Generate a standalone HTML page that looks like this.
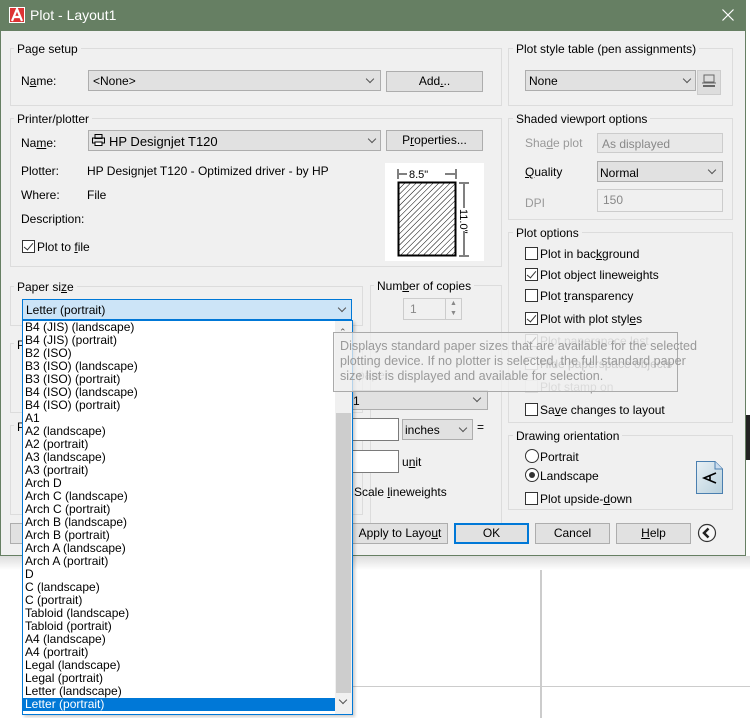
<!DOCTYPE html>
<html><head><meta charset="utf-8"><style>
*{box-sizing:border-box;margin:0;padding:0}
body{width:750px;height:718px;position:relative;overflow:hidden;background:#fff;font-family:"Liberation Sans",sans-serif;font-size:12px;color:#000}
.a{position:absolute;white-space:nowrap}
.grp{position:absolute;border:1px solid #dcdcdc}
.gl{position:absolute;background:#f0f0f0;padding:0 3px;font-size:12px;line-height:14px}
.cb{position:absolute;border:1px solid #adadad;background:#e1e1e1}
.btn{position:absolute;border:1px solid #adadad;background:#e1e1e1;text-align:center;line-height:18px}
.chk{position:absolute;width:13px;height:13px;border:1px solid #333;background:#fff}
.chk.on::after{content:"";position:absolute;left:3px;top:0px;width:4px;height:8px;border:solid #333;border-width:0 1.5px 1.5px 0;transform:rotate(40deg)}
.arr{position:absolute;width:6px;height:6px;border:solid #555;border-width:0 1px 1px 0;transform:rotate(45deg)}
.txt{position:absolute;border:1px solid #7a7a7a;background:#fff}
.list div{height:13px;line-height:13px;padding-left:2px;font-size:12px}
</style></head><body>
<div class="a" style="left:540px;top:555px;width:2px;height:163px;background:#ccc"></div>
<div class="a" style="left:350px;top:686px;width:400px;height:1px;background:#ccc"></div>
<div class="a" style="left:745px;top:415px;width:5px;height:45px;background:#222"></div>
<div class="a" style="left:0;top:556px;width:750px;height:14px;background:linear-gradient(#ddd,#fff)"></div>
<div class="a" style="left:0;top:0;width:746px;height:556px;background:#f0f0f0;border:1px solid #667f63;border-top:none"></div>
<div class="a" style="left:0;top:0;width:746px;height:31px;background:#667f63"></div>
<svg class="a" style="left:9px;top:7px" width="16" height="16"><rect width="16" height="16" fill="#fff"/><rect x="1" y="1" width="14" height="14" fill="#d33"/><path d="M3 14 L8 2 L13 14 M5 10 H11" stroke="#fff" stroke-width="2.2" fill="none"/></svg>
<div class="a" style="left:30px;top:7px;color:#fff;font-size:14px">Plot - Layout1</div>
<svg class="a" style="left:722px;top:9px" width="12" height="12"><path d="M0.5 0.5 L11.5 11.5 M11.5 0.5 L0.5 11.5" stroke="#fff" stroke-width="1.2"/></svg>

<div class="grp" style="left:10px;top:48px;width:492px;height:58px"></div>
<div class="gl" style="left:14px;top:42px">Page setup</div>
<div class="a" style="left:21px;top:74px">N<u>a</u>me:</div>
<div class="cb" style="left:88px;top:70px;width:293px;height:21px"></div>
<div class="a" style="left:93px;top:74px">&lt;None&gt;</div>
<div class="arr" style="left:367px;top:76px"></div>
<div class="btn" style="left:386px;top:71px;width:97px;height:21px">Add<u>.</u>..</div>

<div class="grp" style="left:10px;top:118px;width:492px;height:149px"></div>
<div class="gl" style="left:14px;top:112px">Printer/plotter</div>
<div class="a" style="left:21px;top:136px">Na<u>m</u>e:</div>
<div class="cb" style="left:88px;top:130px;width:293px;height:21px"></div>
<svg class="a" style="left:92px;top:134px" width="13" height="12"><rect x="3" y="0.5" width="7" height="4" fill="none" stroke="#000"/><rect x="0.5" y="4" width="12" height="5" fill="none" stroke="#000"/><rect x="3" y="8" width="7" height="3.5" fill="#fff" stroke="#000"/></svg>
<div class="a" style="left:109px;top:134px;font-size:13px">HP Designjet T120</div>
<div class="arr" style="left:369px;top:136px"></div>
<div class="btn" style="left:386px;top:130px;width:97px;height:21px">P<u>r</u>operties...</div>
<div class="a" style="left:21px;top:164px">Plotter:</div>
<div class="a" style="left:87px;top:164px">HP Designjet T120 - Optimized driver - by HP</div>
<div class="a" style="left:21px;top:188px">Where:</div>
<div class="a" style="left:87px;top:188px">File</div>
<div class="a" style="left:21px;top:212px">Description:</div>
<div class="chk on" style="left:22px;top:240px"></div>
<div class="a" style="left:37px;top:240px">Plot to <u>f</u>ile</div>
<div class="a" style="left:385px;top:163px;width:99px;height:98px;background:#fff"></div>
<svg class="a" style="left:385px;top:163px" width="99" height="98">
<defs><pattern id="h" width="4" height="4" patternUnits="userSpaceOnUse" patternTransform="rotate(45)"><line x1="0" y1="0" x2="0" y2="4" stroke="#000" stroke-width="1"/></pattern></defs>
<rect x="13.5" y="19.5" width="57" height="73" fill="url(#h)" stroke="#000" stroke-width="2"/>
<line x1="13" y1="6" x2="13" y2="16" stroke="#000"/><line x1="71" y1="6" x2="71" y2="16" stroke="#000"/>
<line x1="14" y1="11" x2="22" y2="11" stroke="#000"/><line x1="60" y1="11" x2="70" y2="11" stroke="#000"/>
<text x="24" y="15" font-size="11" font-family="Liberation Sans">8.5"</text>
<line x1="74" y1="20" x2="84" y2="20" stroke="#000"/><line x1="74" y1="93" x2="84" y2="93" stroke="#000"/>
<line x1="79" y1="21" x2="79" y2="45" stroke="#000"/><line x1="79" y1="68" x2="79" y2="92" stroke="#000"/>
<text x="0" y="0" font-size="11" font-family="Liberation Sans" transform="translate(75,46) rotate(90)">11.0"</text>
</svg>

<div class="grp" style="left:10px;top:286px;width:353px;height:40px"></div>
<div class="gl" style="left:14px;top:280px">Paper si<u>z</u>e</div>
<div class="a" style="left:22px;top:299px;width:330px;height:21px;background:#cce4f7;border:1px solid #0078d7"></div>
<div class="a" style="left:26px;top:303px">Letter (portrait)</div>
<div class="arr" style="left:339px;top:305px"></div>
<div class="grp" style="left:370px;top:285px;width:132px;height:250px;border-bottom:none"></div>
<div class="gl" style="left:374px;top:279px">Num<u>b</u>er of copies</div>
<div class="a" style="left:403px;top:298px;width:59px;height:22px;border:1px solid #ccc;background:#f0f0f0"></div>
<div class="a" style="left:410px;top:302px;color:#888">1</div>
<div class="a" style="left:445px;top:299px;width:16px;height:20px;border-left:1px solid #ccc;font-size:7px;color:#888;text-align:center;line-height:10px">▲<br>▼</div>

<div class="grp" style="left:10px;top:343px;width:353px;height:70px"></div>
<div class="gl" style="left:14px;top:338px">P</div>
<div class="grp" style="left:10px;top:425px;width:353px;height:90px"></div>
<div class="gl" style="left:14px;top:420px">P</div>
<div class="a" style="left:358px;top:368px;color:#999">paper</div>
<div class="cb" style="left:352px;top:390px;width:136px;height:20px"></div>
<div class="a" style="left:353px;top:394px">1</div>
<div class="arr" style="left:474px;top:395px"></div>
<div class="txt" style="left:352px;top:418px;width:47px;height:23px"></div>
<div class="cb" style="left:402px;top:419px;width:71px;height:21px"></div>
<div class="a" style="left:405px;top:423px">inches</div>
<div class="arr" style="left:460px;top:425px"></div>
<div class="a" style="left:477px;top:420px">=</div>
<div class="txt" style="left:352px;top:450px;width:47px;height:23px"></div>
<div class="a" style="left:402px;top:455px">u<u>n</u>it</div>
<div class="a" style="left:354px;top:485px">Scale <u>l</u>ineweights</div>

<div class="grp" style="left:508px;top:48px;width:225px;height:58px"></div>
<div class="gl" style="left:513px;top:42px">Plot style table (pen assi<u>g</u>nments)</div>
<div class="cb" style="left:525px;top:70px;width:171px;height:21px"></div>
<div class="a" style="left:529px;top:74px">None</div>
<div class="arr" style="left:684px;top:76px"></div>
<div class="a" style="left:697px;top:70px;width:24px;height:25px;background:#ddd;border:1px solid #ccc"></div>
<svg class="a" style="left:701px;top:74px" width="16" height="16"><rect x="3" y="1" width="10" height="7" fill="none" stroke="#666"/><line x1="1" y1="9" x2="15" y2="9" stroke="#666"/><line x1="2" y1="12" x2="14" y2="12" stroke="#666" stroke-width="2"/></svg>

<div class="grp" style="left:508px;top:118px;width:225px;height:102px"></div>
<div class="gl" style="left:513px;top:112px">Shaded viewport options</div>
<div class="a" style="left:525px;top:136px;color:#999">Sha<u>d</u>e plot</div>
<div class="a" style="left:597px;top:133px;width:126px;height:20px;background:#e8e8e8;border:1px solid #ccc"></div>
<div class="a" style="left:602px;top:137px;color:#888">As displayed</div>
<div class="a" style="left:525px;top:165px"><u>Q</u>uality</div>
<div class="cb" style="left:597px;top:161px;width:126px;height:21px"></div>
<div class="a" style="left:600px;top:166px">Normal</div>
<div class="arr" style="left:709px;top:167px"></div>
<div class="a" style="left:525px;top:196px;color:#999">DPI</div>
<div class="a" style="left:597px;top:189px;width:126px;height:23px;background:#f0f0f0;border:1px solid #ccc"></div>
<div class="a" style="left:603px;top:193px;color:#888">150</div>

<div class="grp" style="left:508px;top:232px;width:225px;height:191px"></div>
<div class="gl" style="left:513px;top:226px">Plot options</div>
<div class="chk" style="left:525px;top:247px"></div><div class="a" style="left:540px;top:247px">Plot in bac<u>k</u>ground</div>
<div class="chk on" style="left:525px;top:268px"></div><div class="a" style="left:540px;top:268px">Plot object lineweights</div>
<div class="chk" style="left:525px;top:289px"></div><div class="a" style="left:540px;top:289px">Plot <u>t</u>ransparency</div>
<div class="chk on" style="left:525px;top:312px"></div><div class="a" style="left:540px;top:312px">Plot with plot styl<u>e</u>s</div>
<div class="chk on" style="left:525px;top:334px;border-color:#999"></div><div class="a" style="left:540px;top:334px;color:#888">Plot paperspace last</div>
<div class="chk" style="left:525px;top:357px;border-color:#aaa"></div><div class="a" style="left:540px;top:357px;color:#555">Hide paperspace objects</div>
<div class="chk" style="left:525px;top:380px;border-color:#ddd;background:#f4f4f4"></div><div class="a" style="left:540px;top:380px;color:#999">Plot stamp on</div>
<div class="chk" style="left:525px;top:403px"></div><div class="a" style="left:540px;top:403px">Sa<u>v</u>e changes to layout</div>

<div class="grp" style="left:508px;top:435px;width:225px;height:75px"></div>
<div class="gl" style="left:513px;top:429px">Drawing orientation</div>
<div class="a" style="left:525px;top:449px;width:14px;height:14px;border:1px solid #333;border-radius:50%;background:#fff"></div>
<div class="a" style="left:540px;top:450px">Portrait</div>
<div class="a" style="left:525px;top:468px;width:14px;height:14px;border:1px solid #333;border-radius:50%;background:#fff"></div>
<div class="a" style="left:529px;top:472px;width:6px;height:6px;border-radius:50%;background:#333"></div>
<div class="a" style="left:540px;top:469px">Landscape</div>
<div class="chk" style="left:525px;top:492px"></div><div class="a" style="left:540px;top:492px">Plot upside-<u>d</u>own</div>
<svg class="a" style="left:696px;top:461px" width="27" height="33"><defs><linearGradient id="g" x1="0" y1="0" x2="1" y2="1"><stop offset="0" stop-color="#e8f0f5"/><stop offset="1" stop-color="#b8d0dc"/></linearGradient></defs><path d="M0.5 0.5 H19 L26.5 8 V32.5 H0.5 Z" fill="url(#g)" stroke="#4a7fb0"/><path d="M19 0.5 V8 H26.5" fill="#cde" stroke="#4a7fb0"/><path d="M20 12 L8 17 L20 22 M14 14.5 V19.5" stroke="#000" stroke-width="1.6" fill="none"/></svg>

<div class="btn" style="left:10px;top:523px;width:14px;height:21px"></div>
<div class="btn" style="left:352px;top:523px;width:96px;height:21px">Apply to Layo<u>u</u>t</div>
<div class="btn" style="left:454px;top:523px;width:75px;height:21px;border:2px solid #0078d7;line-height:17px">OK</div>
<div class="btn" style="left:535px;top:523px;width:75px;height:21px">Cancel</div>
<div class="btn" style="left:616px;top:523px;width:75px;height:21px"><u>H</u>elp</div>
<svg class="a" style="left:697px;top:523px" width="20" height="20"><circle cx="10" cy="10" r="8.5" fill="#f8f8f8" stroke="#333" stroke-width="1.2"/><path d="M11.5 5.5 L7 10 L11.5 14.5" stroke="#222" stroke-width="2.5" fill="none"/></svg>

<div class="a" style="left:22px;top:320px;width:331px;height:395px;background:#fff;border:1px solid #0078d7;box-shadow:2px 2px 3px rgba(0,0,0,.2)"></div>
<div class="a list" style="left:23px;top:321px;width:312px">
<div>B4 (JIS) (landscape)</div><div>B4 (JIS) (portrait)</div><div>B2 (ISO)</div><div>B3 (ISO) (landscape)</div><div>B3 (ISO) (portrait)</div><div>B4 (ISO) (landscape)</div><div>B4 (ISO) (portrait)</div><div>A1</div><div>A2 (landscape)</div><div>A2 (portrait)</div><div>A3 (landscape)</div><div>A3 (portrait)</div><div>Arch D</div><div>Arch C (landscape)</div><div>Arch C (portrait)</div><div>Arch B (landscape)</div><div>Arch B (portrait)</div><div>Arch A (landscape)</div><div>Arch A (portrait)</div><div>D</div><div>C (landscape)</div><div>C (portrait)</div><div>Tabloid (landscape)</div><div>Tabloid (portrait)</div><div>A4 (landscape)</div><div>A4 (portrait)</div><div>Legal (landscape)</div><div>Legal (portrait)</div><div>Letter (landscape)</div><div style="background:#0078d7;color:#fff">Letter (portrait)</div>
</div>
<div class="a" style="left:335px;top:321px;width:17px;height:393px;background:#f0f0f0"></div>
<div class="a" style="left:336px;top:413px;width:15px;height:280px;background:#cdcdcd"></div>
<div class="a" style="left:339px;top:327px;font-size:9px;color:#555">⌃</div>
<div class="arr" style="left:340px;top:697px;border-color:#555"></div>

<div class="a" style="left:333px;top:332px;width:345px;height:60px;background:rgba(240,240,240,.75);border:1px solid #aaa"></div>
<div class="a" style="left:340px;top:339px;font-size:12.6px;line-height:15px;color:#999">Displays standard paper sizes that are available for the selected<br>plotting device. If no plotter is selected, the full standard paper<br>size list is displayed and available for selection.</div>
</body></html>
